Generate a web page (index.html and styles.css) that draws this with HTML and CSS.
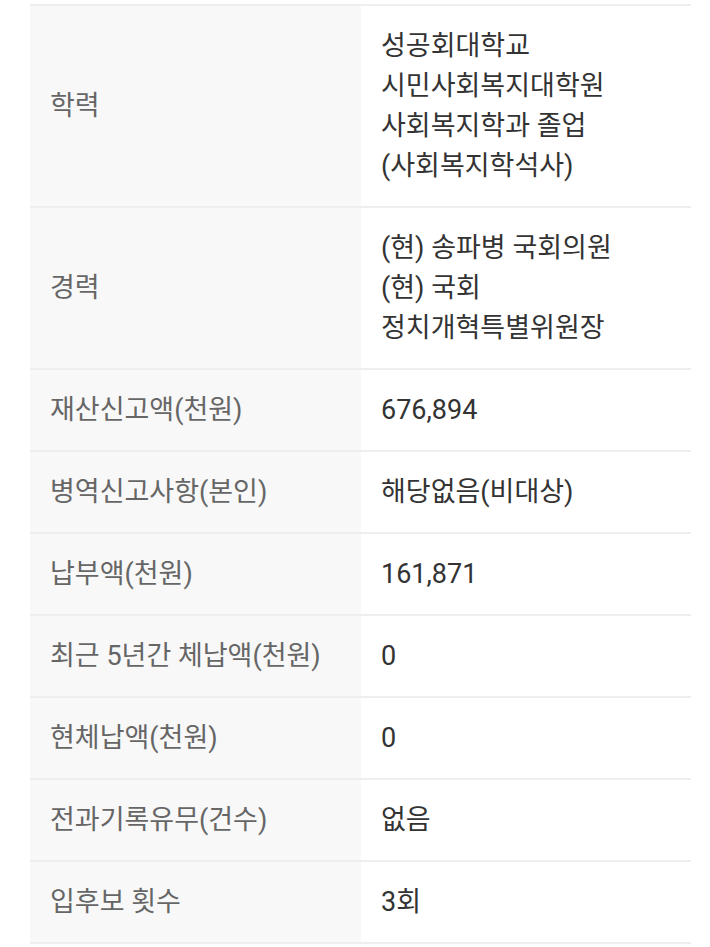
FILE: index.html
```html
<!DOCTYPE html>
<html lang="ko">
<head>
<meta charset="utf-8">
<link rel="stylesheet" href="styles.css">
</head>
<body>
<div class="page">
  <table class="info">
    <tr><th>학력</th><td>성공회대학교<br>시민사회복지대학원<br>사회복지학과 졸업<br>(사회복지학석사)</td></tr>
    <tr><th>경력</th><td>(현) 송파병 국회의원<br>(현) 국회<br>정치개혁특별위원장</td></tr>
    <tr><th>재산신고액(천원)</th><td>676,894</td></tr>
    <tr><th>병역신고사항(본인)</th><td>해당없음(비대상)</td></tr>
    <tr><th>납부액(천원)</th><td>161,871</td></tr>
    <tr><th>최근 5년간 체납액(천원)</th><td>0</td></tr>
    <tr><th>현체납액(천원)</th><td>0</td></tr>
    <tr><th>전과기록유무(건수)</th><td>없음</td></tr>
    <tr><th>입후보 횟수</th><td>3회</td></tr>
  </table>
</div>
</body>
</html>
```

FILE: styles.css
```css
html, body {
  margin: 0;
  padding: 0;
  background: #ffffff;
}
.page {
  padding: 4px 19px 0 30px;
}
.info {
  width: 661px;
  border-collapse: collapse;
  font-family: Roboto, "Noto Sans CJK KR", sans-serif;
  font-size: 27px;
  line-height: 40px;
}
.info th, .info td {
  border-top: 2px solid #eeeeee;
  border-bottom: 2px solid #eeeeee;
  padding: 20px 20px;
  text-align: left;
  vertical-align: middle;
}
.info th {
  width: 291px;
  background: #f8f8f8;
  color: #666666;
  font-weight: 400;
}
.info td {
  color: #333333;
  font-weight: 400;
}
```
